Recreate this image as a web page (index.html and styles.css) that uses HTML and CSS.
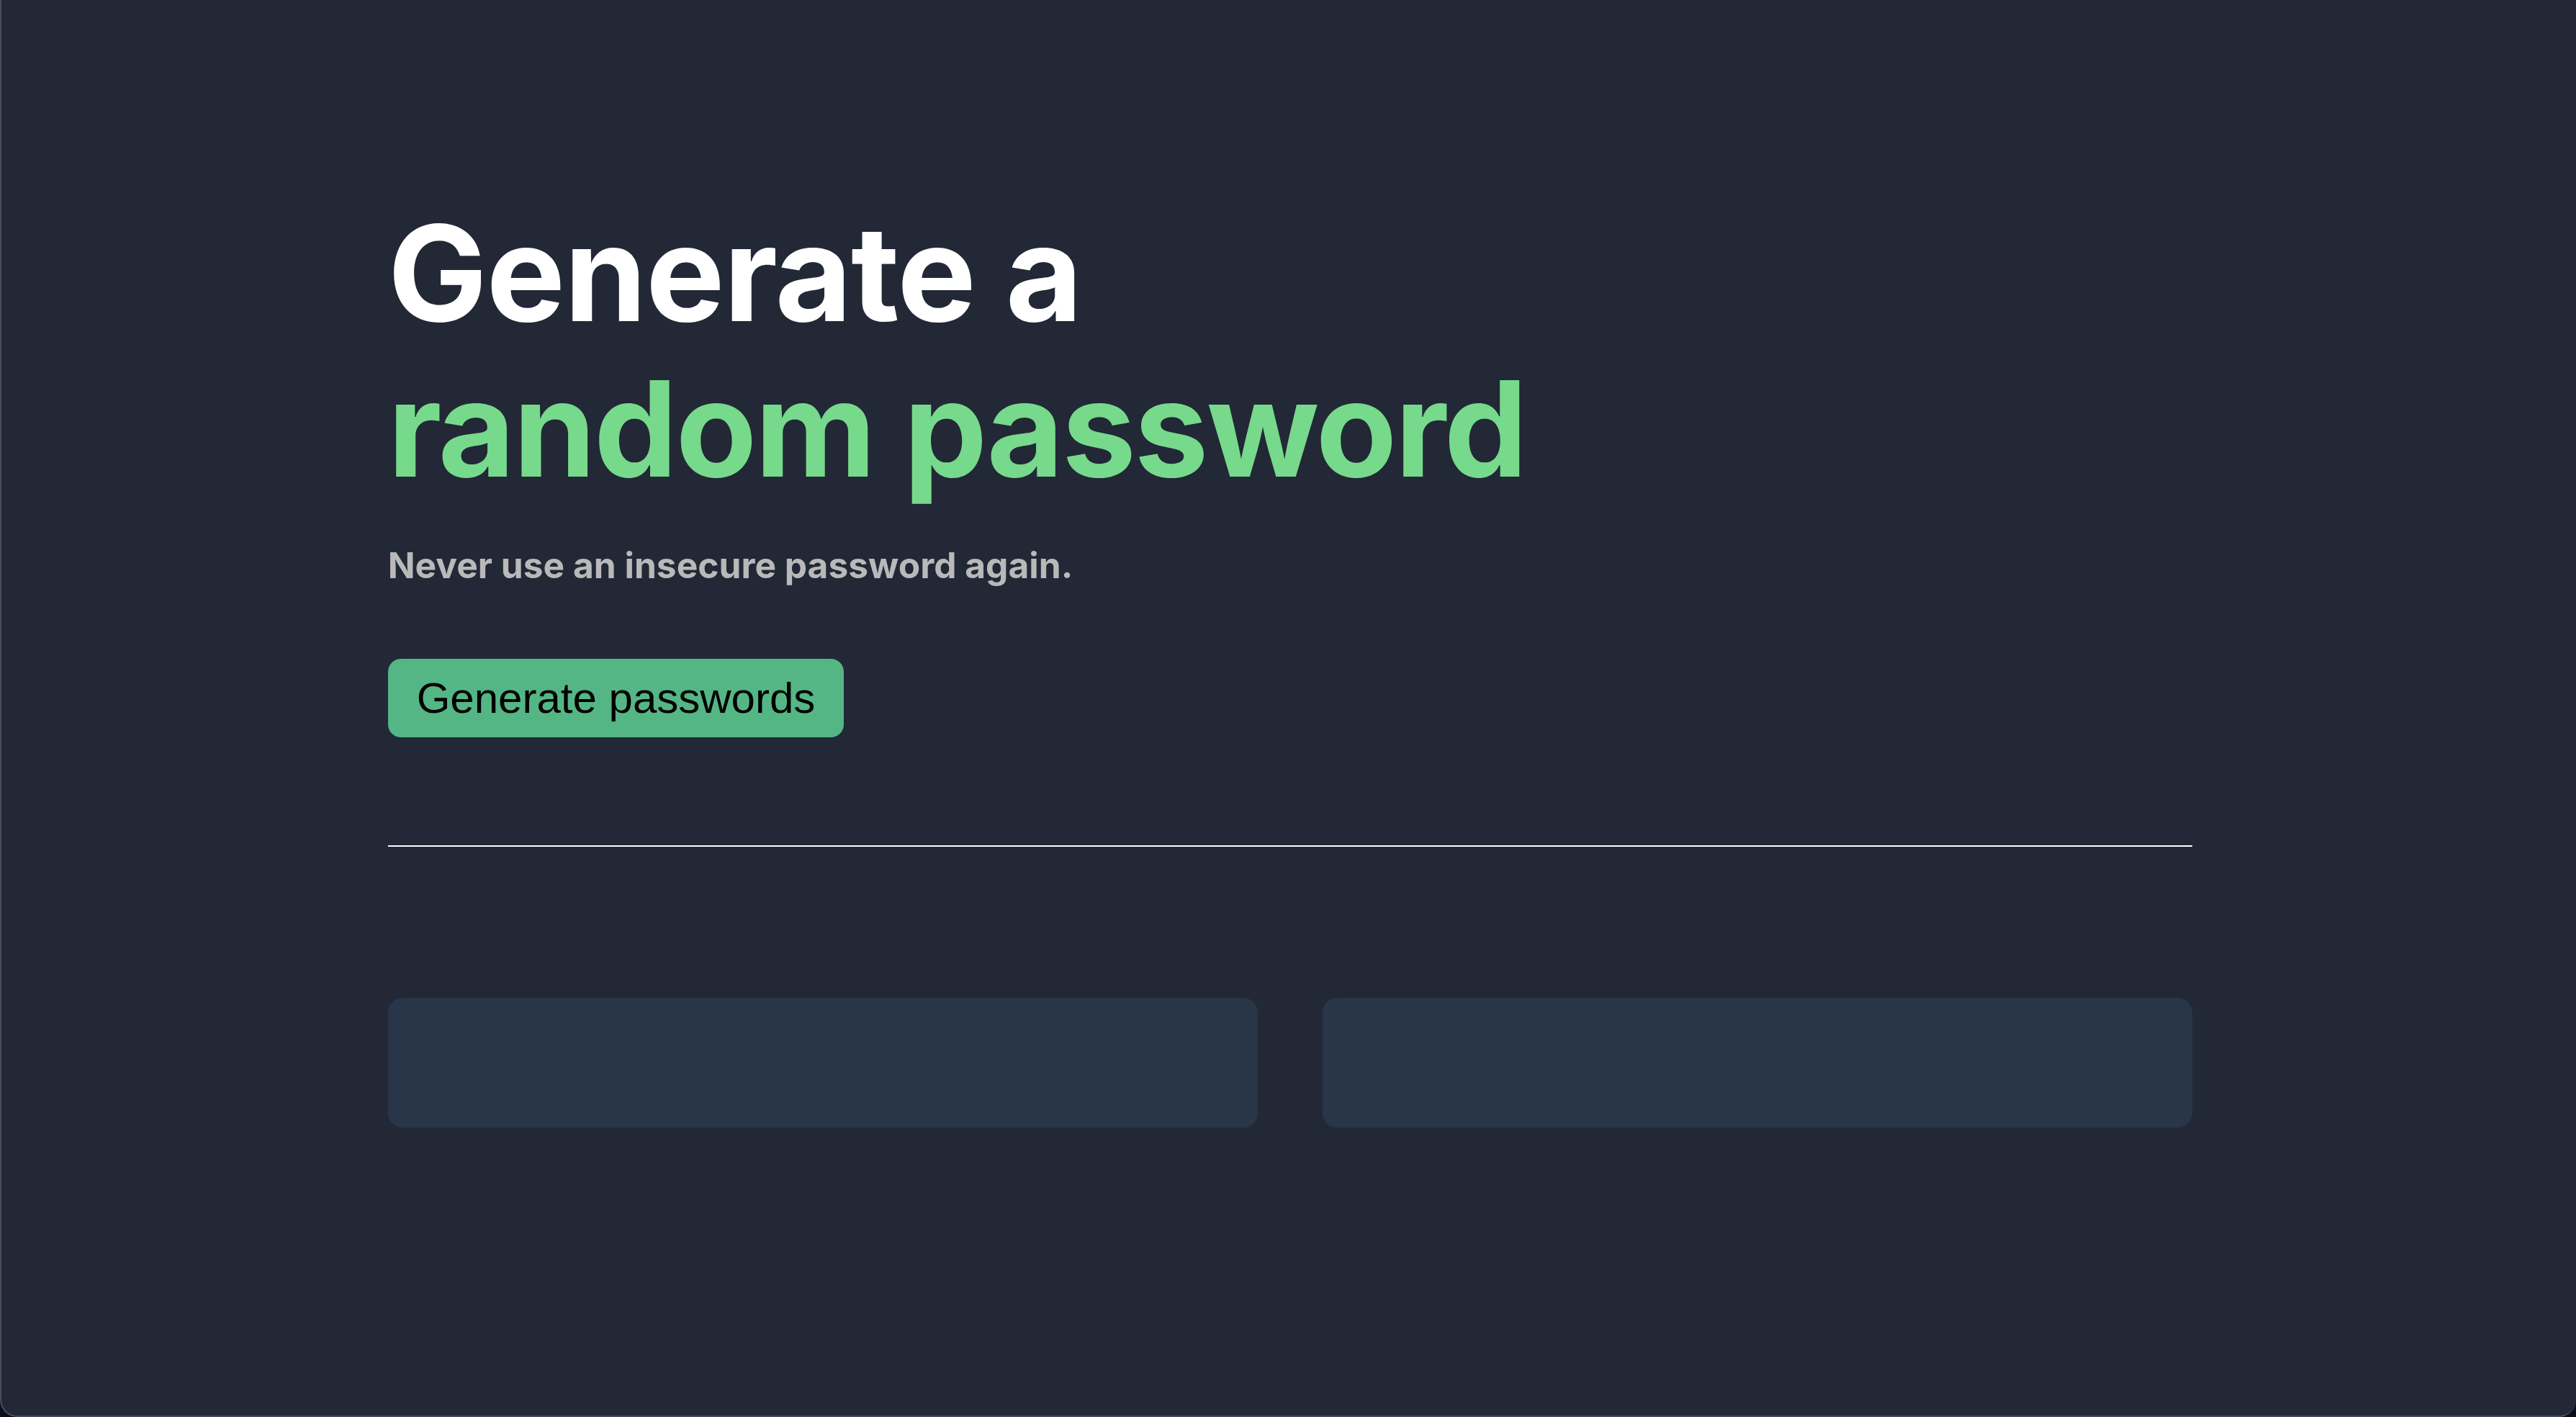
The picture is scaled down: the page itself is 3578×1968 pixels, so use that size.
FILE: index.html
```html
<!DOCTYPE html>
<html lang="en">
<head>
<meta charset="utf-8">
<title>Password Generator</title>
<link rel="stylesheet" href="styles.css">
</head>
<body>
<div class="window">
  <main class="container">
    <h1 class="title">Generate a<br><span class="accent">random password</span></h1>
    <p class="subtitle">Never use an insecure password again.</p>
    <button class="generate-btn" type="button">Generate passwords</button>
    <hr class="divider">
    <div class="outputs">
      <div class="output-box"></div>
      <div class="output-box"></div>
    </div>
  </main>
</div>
</body>
</html>
```
FILE: styles.css
```css
html, body {
  margin: 0;
  padding: 0;
  background: #0b0f17;
}

.window {
  box-sizing: border-box;
  height: 100vh;
  background: #222836;
  border-left: 2px solid #474d59;
  border-bottom: 2px solid #474d59;
  border-radius: 0 0 24px 24px;
  overflow: hidden;
}

.container {
  width: calc(70vw + 2px);
  margin: 0 0 0 15vw;
  padding-top: 271px;
  font-family: Inter, "Noto Sans", sans-serif;
}

.title {
  margin: 0;
  font-size: 184px;
  line-height: 216px;
  font-weight: 700;
  color: #ffffff;
  letter-spacing: -1.3px;
}

.accent {
  color: #77d98b;
  letter-spacing: -2.5px;
}

.subtitle {
  margin: 53px 0 0;
  font-size: 49.7px;
  line-height: 58px;
  font-weight: 700;
  color: #b9b9b9;
}

.generate-btn {
  display: block;
  margin-top: 101px;
  padding: 20px 40px;
  border: none;
  border-radius: 18px;
  background: #55b685;
  color: #000000;
  font-family: "Liberation Sans", Arial, sans-serif;
  font-size: 60px;
  line-height: 69px;
}

.divider {
  margin: 150px 0 0;
  border: none;
  height: 2px;
  background: #ffffff;
}

.outputs {
  margin-top: 210px;
  display: grid;
  grid-template-columns: 1fr 1fr;
  gap: 90px;
}

.output-box {
  height: 180px;
  border-radius: 20px;
  background: #293548;
}
```
